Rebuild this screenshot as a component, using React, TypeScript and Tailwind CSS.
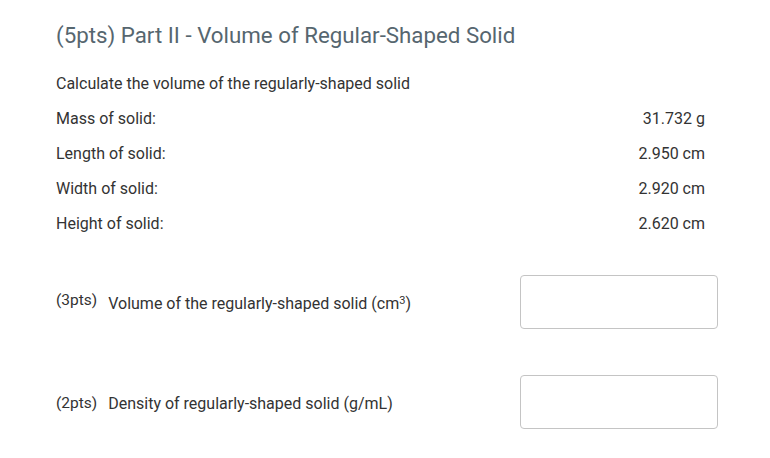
import React from "react";

const rows: [string, string][] = [
  ["Mass of solid:", "31.732 g"],
  ["Length of solid:", "2.950 cm"],
  ["Width of solid:", "2.920 cm"],
  ["Height of solid:", "2.620 cm"],
];

export default function App() {
  return (
    <div className="w-[770px] h-[458px] bg-white pl-[56px] pr-[52px] pt-[20px]" style={{ fontFamily: "Roboto, 'Liberation Sans', sans-serif" }}>
      <h1 className="text-[22.3px] leading-[30px] text-[#56666f] font-normal">(5pts) Part II - Volume of Regular-Shaped Solid</h1>
      <div className="mt-[16px] text-[16px] text-[#333333]">
        <div className="h-[35px] flex items-center">Calculate the volume of the regularly-shaped solid</div>
        {rows.map(([l, v]) => (
          <div key={l} className="h-[35px] flex items-center justify-between pr-[13px]">
            <span>{l}</span>
            <span>{v}</span>
          </div>
        ))}
      </div>
      <div className="mt-[34px] flex items-center justify-between h-[54px] text-[16px] text-[#333333]">
        <div className="flex items-center gap-[11px] pt-[4px]">
          <span className="-mt-[6px] text-[15.5px]">(3pts)</span>
          <span>
            Volume of the regularly-shaped solid (cm<sup className="text-[11px]">3</sup>)
          </span>
        </div>
        <div className="w-[198px] h-[54px] border border-[#c4c4c4] rounded-[4px]" />
      </div>
      <div className="mt-[46px] flex items-center justify-between h-[54px] text-[16px] text-[#333333]">
        <div className="flex items-center gap-[11px] pt-[4px]">
          <span className="text-[15.5px]">(2pts)</span>
          <span>Density of regularly-shaped solid (g/mL)</span>
        </div>
        <div className="w-[198px] h-[54px] border border-[#c4c4c4] rounded-[4px]" />
      </div>
    </div>
  );
}
